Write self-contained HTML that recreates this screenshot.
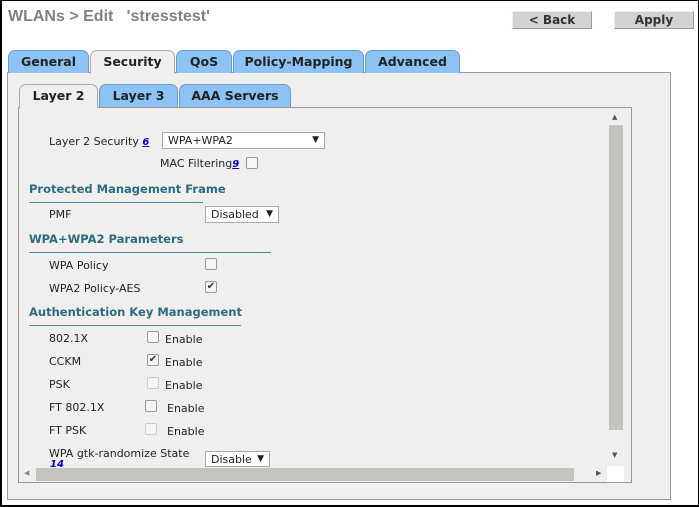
<!DOCTYPE html>
<html><head><style>
*{margin:0;padding:0;box-sizing:border-box}
body{width:699px;height:507px;background:#fff;position:relative;overflow:hidden;font-family:"DejaVu Sans",Verdana,sans-serif;font-size:11px;color:#222}
#frame{position:absolute;left:0;top:0;width:699px;height:507px;border:1px solid #000;border-left-width:2px;border-bottom-width:2px}
.a{position:absolute;white-space:nowrap}
.title{left:8px;top:8px;font-family:"Liberation Sans",Arial,sans-serif;font-weight:bold;font-size:16px;color:#808080}
.btn{height:18px;width:80px;background:#d4d2d0;border:1px solid #999;border-top-color:#eee;border-left-color:#eee;font-weight:bold;font-size:12px;text-align:center;line-height:16px;color:#333}
.tab{height:23px;background:#8cc2f4;border:1px solid #6a9cc9;border-bottom:none;border-radius:7px 7px 0 0;font-weight:bold;font-size:12.5px;text-align:center;line-height:21px;color:#222}
.tab.on{background:#f0efed;border-color:#aaa}
.panel{background:#f0efed;border:1px solid #999}
.h{color:#2b6c83;font-weight:bold;font-size:11.5px}
.ln{height:1px;background:#4a8aa0}
.cb{width:12px;height:12px;border:1px solid #999;border-radius:2px;background:#f5f5f5}
.cb.dim{border-color:#ccc}
.sel{height:17px;border:1px solid #aaa;background:#fff;font-size:11px;padding-left:5px;line-height:15px}
.sel:after{content:"▼";position:absolute;right:5px;top:0;font-size:9px}
sup a,.u{color:#00c;text-decoration:underline;font-style:italic;font-weight:bold;font-size:10px}
</style></head><body>
<div id="frame"></div>
<div class="a title">WLANs &gt; Edit &nbsp; 'stresstest'</div>
<div class="a btn" style="left:512px;top:11px">&lt; Back</div>
<div class="a btn" style="left:614px;top:11px">Apply</div>

<div class="a panel" style="left:7px;top:72px;width:664px;height:428px"></div>
<div class="a tab" style="left:8px;top:50px;width:81px">General</div>
<div class="a tab on" style="left:90px;top:50px;width:85px;height:24px">Security</div>
<div class="a tab" style="left:176px;top:50px;width:56px">QoS</div>
<div class="a tab" style="left:233px;top:50px;width:131px">Policy-Mapping</div>
<div class="a tab" style="left:365px;top:50px;width:95px">Advanced</div>

<div class="a panel" style="left:18px;top:107px;width:614px;height:376px"></div>
<div class="a tab" style="left:19px;top:84px;width:79px;background:#f0efed;border-color:#aaa;height:24px">Layer 2</div>
<div class="a tab" style="left:99px;top:84px;width:79px">Layer 3</div>
<div class="a tab" style="left:179px;top:84px;width:112px">AAA Servers</div>

<!-- scrollbars -->
<div class="a" style="left:609px;top:125px;width:14px;height:305px;background:#c5c3bd"></div>
<div class="a" style="left:612px;top:113px;font-size:7px;color:#555">▲</div>
<div class="a" style="left:612px;top:451px;font-size:7px;color:#555">▼</div>
<div class="a" style="left:36px;top:468px;width:538px;height:13px;background:#c5c3bd"></div>
<div class="a" style="left:24px;top:469px;font-size:7px;color:#888">◀</div>
<div class="a" style="left:596px;top:469px;font-size:7px;color:#555">▶</div>
<div class="a" style="left:607px;top:466px;width:17px;height:16px;background:#fff"></div>

<div class="a" style="left:49px;top:135px">Layer 2 Security <span class="u">6</span></div>
<div class="a sel" style="left:162px;top:132px;width:163px">WPA+WPA2</div>
<div class="a" style="left:160px;top:157px">MAC Filtering<span class="u">9</span></div>
<div class="a cb" style="left:246px;top:157px"></div>

<div class="a h" style="left:29px;top:182px">Protected Management Frame</div>
<div class="a ln" style="left:29px;top:202px;width:174px"></div>
<div class="a" style="left:49px;top:208px">PMF</div>
<div class="a sel" style="left:205px;top:206px;width:74px">Disabled</div>

<div class="a h" style="left:29px;top:232px">WPA+WPA2 Parameters</div>
<div class="a ln" style="left:29px;top:252px;width:242px"></div>
<div class="a" style="left:49px;top:259px">WPA Policy</div>
<div class="a cb" style="left:205px;top:258px"></div>
<div class="a" style="left:49px;top:282px">WPA2 Policy-AES</div>
<div class="a cb" style="left:205px;top:281px;font-size:10px;line-height:10px;text-align:center;color:#333">✔</div>

<div class="a h" style="left:29px;top:305px">Authentication Key Management</div>
<div class="a ln" style="left:29px;top:325px;width:212px"></div>

<div class="a" style="left:49px;top:332px">802.1X</div><div class="a cb" style="left:147px;top:331px"></div><div class="a" style="left:165px;top:333px">Enable</div>
<div class="a" style="left:49px;top:355px">CCKM</div><div class="a cb" style="left:147px;top:354px;font-size:10px;line-height:10px;text-align:center;color:#333">✔</div><div class="a" style="left:165px;top:356px">Enable</div>
<div class="a" style="left:49px;top:378px">PSK</div><div class="a cb dim" style="left:147px;top:377px"></div><div class="a" style="left:165px;top:379px">Enable</div>
<div class="a" style="left:49px;top:401px">FT 802.1X</div><div class="a cb" style="left:145px;top:400px"></div><div class="a" style="left:167px;top:402px">Enable</div>
<div class="a" style="left:49px;top:424px">FT PSK</div><div class="a cb dim" style="left:145px;top:423px"></div><div class="a" style="left:167px;top:425px">Enable</div>
<div class="a" style="left:49px;top:447px">WPA gtk-randomize State</div>
<div class="a u" style="left:50px;top:459px;height:8px;overflow:hidden">14</div>
<div class="a sel" style="left:205px;top:451px;width:65px;height:16px">Disable</div>
</body></html>
